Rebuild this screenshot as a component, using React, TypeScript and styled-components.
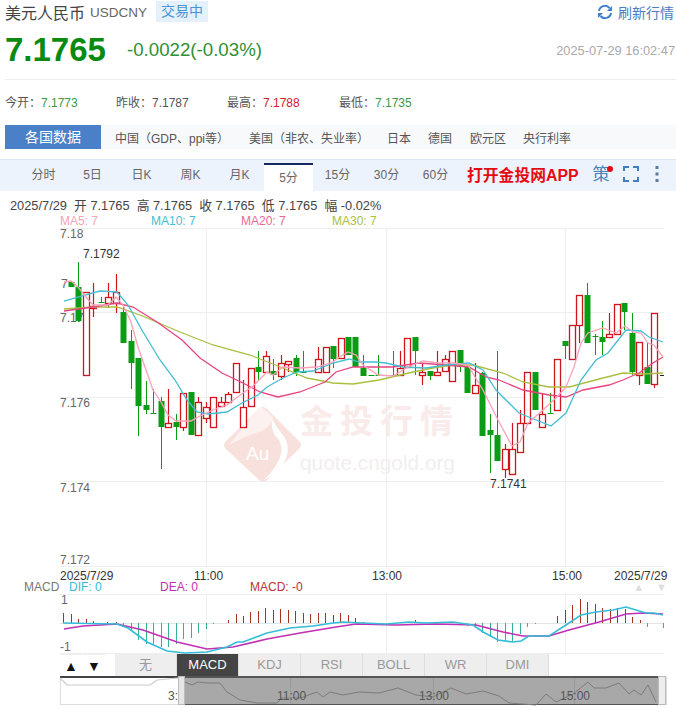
import React from 'react';
import styled, { createGlobalStyle } from 'styled-components';

const FONT = '"Liberation Sans", "Noto Sans CJK SC", sans-serif';

const GlobalStyle = createGlobalStyle`
  html, body { margin: 0; padding: 0; background: #fff; }
  body { font-family: ${FONT}; }
`;

const Page = styled.div`
  width: 676px;
  height: 708px;
  overflow: hidden;
  background: #fff;
`;

const TitleRow = styled.div`
  display: flex;
  align-items: center;
  height: 24px;
  padding: 0 2px 0 5px;
`;
const Title = styled.span`
  font-size: 16px;
  color: #444;
`;
const Symbol = styled.span`
  font-size: 13.5px;
  color: #666;
  margin-left: 5px;
`;
const Badge = styled.span`
  margin-left: 9px;
  margin-top: -1px;
  padding: 0 5px;
  height: 21px;
  line-height: 21px;
  font-size: 14px;
  color: #4a93d6;
  background: #e4f1fb;
`;
const Refresh = styled.span`
  margin-left: auto;
  display: flex;
  align-items: center;
  gap: 5px;
  font-size: 14px;
  color: #4a7cc4;
`;

const QuoteRow = styled.div`
  display: flex;
  align-items: center;
  height: 52px;
  margin-left: 5px;
  padding-bottom: 3px;
  border-bottom: 1px solid #eee;
`;
const Price = styled.span`
  font-size: 33px;
  font-weight: bold;
  color: #0a8a10;
`;
const Change = styled.span`
  margin-left: 21px;
  font-size: 18.7px;
  color: #2f8f35;
`;
const Stamp = styled.span`
  margin-left: auto;
  margin-right: 1px;
  font-size: 12.8px;
  color: #aaa;
`;

const StatRow = styled.div`
  display: flex;
  align-items: center;
  box-sizing: border-box;
  height: 45px;
  padding: 0 0 2px 5px;
  font-size: 12px;
  color: #555;
`;
const Stat = styled.span<{ $width: number }>`
  width: ${(p) => p.$width}px;
`;
const StatValue = styled.span<{ $tone?: 'up' | 'down' }>`
  color: ${(p) => (p.$tone === 'up' ? '#d0202a' : p.$tone === 'down' ? '#3a9a45' : '#555')};
`;

const NavRow = styled.div`
  display: flex;
  align-items: center;
  height: 24px;
  margin-left: 5px;
  background: #f8f9fb;
  font-size: 12px;
  color: #555;
`;
const NavHead = styled.span`
  width: 96px;
  height: 24px;
  line-height: 24px;
  text-align: center;
  font-size: 14px;
  color: #fff;
  background: #4a80c8;
`;
const NavItem = styled.span<{ $left: number }>`
  margin-left: ${(p) => p.$left}px;
`;

const TabBar = styled.div`
  display: flex;
  align-items: flex-end;
  height: 31px;
  margin-top: 10px;
  padding-left: 19px;
  background: #ecf3fc;
  border-top: 1px solid #dbe6f3;
`;
const Period = styled.span<{ $active?: boolean }>`
  width: 49px;
  box-sizing: border-box;
  height: ${(p) => (p.$active ? '28px' : '31px')};
  line-height: ${(p) => (p.$active ? '27px' : '31px')};
  text-align: center;
  font-size: 12px;
  color: #666;
  background: ${(p) => (p.$active ? '#fff' : 'transparent')};
  border-top: ${(p) => (p.$active ? '2px solid #16265f' : 'none')};
`;
const AppLink = styled.span`
  align-self: center;
  margin-left: 7px;
  margin-top: -3px;
  font-size: 15.8px;
  font-weight: bold;
  white-space: nowrap;
  color: #e60b12;
`;
const Strategy = styled.span`
  position: relative;
  align-self: center;
  margin-left: 14px;
  margin-top: -2px;
  font-size: 17px;
  line-height: 22px;
  color: #4a82b8;
`;
const RedDot = styled.i`
  display: block;
  position: absolute;
  top: 2px;
  right: -4px;
  width: 6px;
  height: 6px;
  border-radius: 50%;
  background: #e60b12;
`;
const IconSlot = styled.span<{ $left: number }>`
  align-self: center;
  display: flex;
  margin-left: ${(p) => p.$left}px;
  margin-top: -3px;
`;

const InfoRow = styled.div`
  height: 15px;
  line-height: 16px;
  margin-top: 7px;
  padding-left: 10px;
  font-size: 12.8px;
  color: #444;
  white-space: pre;
`;
const MaRow = styled.div`
  display: flex;
  height: 14px;
  line-height: 16px;
  font-size: 12px;
  padding-left: 60px;
`;
const MaLabel = styled.span<{ $color: string; $width: number }>`
  width: ${(p) => p.$width}px;
  color: ${(p) => p.$color};
`;

const ChartSvg = styled.svg`
  display: block;
  overflow: visible;
`;

const LegendRow = styled.div`
  display: flex;
  align-items: center;
  height: 14px;
  padding-left: 24px;
  font-size: 12px;
  line-height: 10px;
`;
const LegendItem = styled.span<{ $color: string; $width: number }>`
  width: ${(p) => p.$width}px;
  color: ${(p) => p.$color};
`;
const Arrows = styled.span`
  margin-left: auto;
  margin-right: 9px;
  display: flex;
  gap: 12px;
  font-size: 11px;
  color: #ddd;
`;

const IndicatorRow = styled.div`
  display: flex;
  height: 22px;
  padding-left: 60px;
`;
const StepButton = styled.span`
  width: 22px;
  height: 22px;
  line-height: 22px;
  margin-right: 1px;
  text-align: center;
  font-size: 14px;
  color: #111;
  border-top: 1px solid #eee;
  box-sizing: border-box;
`;
const IndicatorTabs = styled.div`
  display: flex;
  margin-left: 9px;
`;
const IndicatorTab = styled.span<{ $active?: boolean }>`
  width: 62px;
  height: 22px;
  line-height: 22px;
  box-sizing: border-box;
  text-align: center;
  font-size: 13px;
  color: ${(p) => (p.$active ? '#fff' : '#999')};
  background: ${(p) => (p.$active ? '#444' : '#eee')};
  border-right: 1px solid #ddd;
`;

// [x, body top, body bottom, high, low, red?]
type Candle = [number, number, number, number, number, 0 | 1];
const candles: Candle[] = [
  [71, 282, 287, 282, 287, 0], [78, 287, 321, 262, 322, 0], [86, 292, 375, 292, 375, 1], [93, 306, 308, 283, 317, 1],
  [101, 302, 303, 297, 303, 0], [108, 297, 303, 283, 308, 1], [116, 292, 303, 274, 313, 1], [123, 312, 343, 307, 343, 0],
  [131, 341, 363, 330, 389, 0], [138, 358, 406, 358, 436, 0], [146, 405, 410, 381, 414, 0], [153, 413, 413, 389, 413, 0],
  [161, 401, 427, 397, 469, 0], [168, 423, 427, 389, 427, 1], [176, 422, 427, 414, 440, 0], [183, 393, 427, 393, 431, 1],
  [191, 392, 435, 392, 435, 0], [198, 402, 435, 397, 435, 1], [206, 407, 418, 402, 423, 1], [213, 397, 427, 397, 427, 1],
  [221, 402, 406, 397, 406, 1], [228, 394, 402, 392, 402, 1], [236, 363, 392, 363, 392, 1], [243, 407, 427, 380, 427, 1],
  [251, 368, 406, 368, 406, 1], [258, 367, 372, 351, 380, 0], [266, 356, 372, 351, 372, 1], [273, 371, 375, 359, 380, 0],
  [281, 363, 376, 355, 380, 1], [288, 361, 364, 361, 372, 1], [296, 358, 372, 355, 376, 0], [303, 372, 372, 351, 372, 0],
  [318, 359, 372, 347, 372, 1], [326, 347, 372, 347, 372, 1], [333, 346, 359, 346, 368, 0], [341, 338, 358, 338, 358, 1],
  [348, 337, 355, 337, 355, 0], [355, 337, 367, 337, 367, 0], [363, 368, 376, 355, 376, 0], [371, 375, 375, 375, 375, 0],
  [378, 375, 375, 355, 375, 0], [393, 375, 375, 351, 375, 0], [400, 368, 375, 351, 375, 1], [407, 338, 367, 338, 367, 1],
  [415, 337, 351, 337, 375, 0], [422, 372, 375, 364, 385, 1], [430, 371, 376, 371, 380, 0], [437, 372, 375, 351, 375, 1],
  [445, 359, 371, 355, 371, 1], [452, 351, 381, 351, 381, 1], [460, 350, 367, 350, 372, 0], [467, 367, 393, 367, 393, 0],
  [475, 385, 393, 363, 393, 1], [482, 373, 436, 372, 436, 0], [490, 430, 435, 414, 473, 0], [497, 435, 461, 351, 461, 0],
  [505, 449, 469, 444, 478, 1], [512, 449, 474, 423, 474, 1], [520, 423, 452, 410, 452, 1], [527, 372, 423, 372, 423, 1],
  [535, 372, 410, 372, 410, 0], [542, 414, 427, 393, 427, 1], [550, 413, 413, 393, 414, 0], [557, 359, 410, 359, 410, 1],
  [565, 341, 346, 341, 359, 0], [572, 325, 359, 325, 359, 1], [579, 295, 325, 295, 343, 1], [587, 295, 343, 283, 343, 0],
  [595, 336, 336, 334, 355, 0], [602, 337, 342, 321, 355, 0], [609, 334, 337, 313, 337, 1], [617, 304, 334, 304, 334, 1],
  [624, 303, 312, 303, 330, 0], [632, 333, 372, 313, 375, 0], [639, 342, 375, 342, 385, 1], [647, 367, 384, 343, 384, 0],
  [654, 313, 384, 313, 388, 1],
];

const ma5 = '64,282 71,281 78,287 86,297 93,305 108,305 116,297 123,305 131,322 138,347 146,370 153,390 161,402 168,415 176,421 191,421 198,417 213,410 227,405 243,393 253,386 267,372 273,375 283,367 300,368 317,367 333,362 338,358 348,352 356,355 363,365 378,375 393,376 408,367 423,361 438,363 453,363 468,365 475,377 483,390 498,420 512,446 520,442 528,423 543,410 557,397 566,387 574,367 581,343 588,333 603,328 616,333 625,326 633,332 641,333 648,343 654,345 663,357';
const ma10 = '64,301 78,297 100,291 117,292 128,305 143,332 160,360 175,380 187,400 197,412 208,414 227,412 242,403 258,395 267,387 283,378 297,372 313,371 333,363 349,359 359,362 376,362 386,363 403,367 426,368 446,365 469,363 483,370 496,390 519,413 551,426 566,413 581,380 596,360 608,353 626,330 641,331 649,337 663,342';
const ma20 = '64,311 93,307 117,303 133,307 157,322 182,340 200,358 222,373 243,383 260,392 278,397 300,392 325,382 336,372 353,367 369,367 393,367 419,363 446,365 469,367 486,377 499,380 523,390 549,395 566,397 583,390 609,385 623,380 639,373 653,363 663,357';
const ma30 = '64,309 93,307 117,307 140,315 180,332 213,345 250,355 283,368 307,378 333,383 353,384 379,380 413,372 433,368 453,365 473,365 503,373 523,382 549,387 569,387 603,378 623,373 643,374 663,373';

const hist: [number, number][] = [
  [63, 613], [71, 614], [78, 619], [86, 619], [93, 621], [107, 622], [116, 622], [123, 627], [131, 631], [138, 640],
  [146, 644], [153, 645], [161, 647], [168, 647], [176, 644], [183, 639], [191, 638], [198, 633], [206, 629], [213, 624],
  [228, 620], [236, 614], [243, 616], [250, 612], [258, 611], [265, 608], [273, 610], [280, 609], [288, 610], [295, 611],
  [303, 613], [310, 614], [318, 613], [325, 613], [333, 615], [340, 613], [348, 615], [355, 618], [363, 622], [408, 622],
  [415, 620], [467, 626], [475, 627], [482, 633], [490, 637], [497, 642], [505, 641], [512, 641], [520, 634], [527, 627],
  [535, 624], [557, 616], [565, 610], [572, 605], [580, 599], [587, 602], [595, 604], [602, 608], [610, 609], [617, 608],
  [625, 609], [632, 617], [640, 620], [647, 627], [663, 628],
];
const dif = '63,623 117,624 128,628 147,642 167,651 185,653 207,652 227,647 237,642 243,642 267,633 290,628 313,626 333,623 343,622 363,623 386,624 409,622 426,623 453,622 473,625 483,632 498,640 513,642 521,641 529,636 549,636 569,623 581,615 596,612 613,610 626,607 636,610 646,613 654,613 663,615';
const dea = '64,629 83,626 117,624 143,630 177,642 207,649 233,647 267,639 300,633 336,627 356,624 396,625 436,624 476,625 503,632 523,636 549,636 569,630 599,622 626,614 643,613 663,614';

const miniLeft = '60,678 67,685 150,685 157,680 178,678';
const miniLine = '185,682 192,685 198,682 207,683 220,683 227,692 240,700 257,703 277,703 282,698 300,698 317,692 323,697 330,692 343,695 359,692 379,693 398,688 416,695 433,697 451,688 466,694 483,691 499,696 509,703 536,705 546,694 556,702 573,694 588,682 594,688 606,688 619,683 629,694 634,690 641,695 648,685 656,702';

const GRID = '#eeeeee';
const RED = '#d0141e';
const GREEN = '#0b9c16';

const priceText = { fontSize: 12, fill: '#666' };
const axisText = { fontSize: 12, fill: '#333' };

const CandleMark = ({ c }: { c: Candle }) => {
  const [x, top, bottom, high, low, red] = c;
  const cx = x + 0.5;
  const color = red ? RED : GREEN;
  return (
    <g>
      <line x1={cx} x2={cx} y1={high} y2={low} stroke={color} strokeWidth={red ? 1.2 : 1} />
      {red ? (
        <rect x={cx - 3} y={top + 0.5} width={6} height={Math.max(bottom - top, 1)} fill="#fff" stroke={color} strokeWidth={1.3} />
      ) : bottom - top < 1 ? (
        <line x1={cx - 3} x2={cx + 3} y1={top + 0.5} y2={top + 0.5} stroke={color} />
      ) : (
        <rect x={cx - 3} y={top} width={6} height={bottom - top} fill={color} />
      )}
    </g>
  );
};

const Watermark = () => (
  <g>
    <path
      d="M226 441 L259 409 Q263 405 267 409 L299 441 Q303 445 299 449 L267 480 Q263 484 259 480 L226 449 Q222 445 226 441 Z"
      fill="#f8e1dd"
    />
    <path d="M229 445 Q250 434 262 431 Q272 425 273 417 L263 408 Q260 406 257 410 Z" fill="#fcf1ef" />
    <path d="M272 419 Q270 432 279 440 Q288 456 264 480 Q276 474 284 463 Q292 447 283 435 Q277 428 272 419 Z" fill="#fff" />
    <text x="246" y="460" fontSize="19" fill="#fff">Au</text>
    <text x="300" y="433" fontSize="33" fontWeight="bold" letterSpacing="7" fill="#f9ebe9">金投行情</text>
    <text x="300" y="470" fontSize="20.8" fill="#f2eeee">quote.cngold.org</text>
  </g>
);

const PriceChart = () => (
  <ChartSvg width={676} height={353} viewBox="0 227 676 353" style={{ fontFamily: FONT }}>
    <Watermark />
    {[228, 312, 397, 481, 566].map((y) => (
      <line key={y} x1={60} x2={664} y1={y + 0.5} y2={y + 0.5} stroke={GRID} />
    ))}
    {[206, 386, 565].map((x) => (
      <line key={x} x1={x + 0.5} x2={x + 0.5} y1={228} y2={566} stroke={GRID} />
    ))}
    <text x={60} y={238} {...priceText}>7.18</text>
    <text x={61} y={288} {...priceText}>7</text>
    <text x={60} y={322} {...priceText}>7.17</text>
    <text x={60} y={407} {...priceText}>7.176</text>
    <text x={60} y={492} {...priceText}>7.174</text>
    <text x={60} y={564} {...priceText}>7.172</text>
    {candles.map((c) => (
      <CandleMark key={c[0]} c={c} />
    ))}
    <line x1={660} x2={664} y1={375.5} y2={375.5} stroke="#222" />
    <polyline points={ma30} fill="none" stroke="#a9c03f" strokeWidth={1.3} />
    <polyline points={ma20} fill="none" stroke="#e8437f" strokeWidth={1.3} />
    <polyline points={ma10} fill="none" stroke="#45bdd2" strokeWidth={1.3} />
    <polyline points={ma5} fill="none" stroke="#f6a3bb" strokeWidth={1.3} />
    <text x={83} y={258} fontSize={12} fill="#333">7.1792</text>
    <text x={490} y={488} fontSize={12} fill="#333">7.1741</text>
    <text x={60} y={580} {...axisText}>2025/7/29</text>
    <text x={194} y={580} {...axisText}>11:00</text>
    <text x={372} y={580} {...axisText}>13:00</text>
    <text x={552} y={580} {...axisText}>15:00</text>
    <text x={614} y={580} {...axisText}>2025/7/29</text>
  </ChartSvg>
);

const MacdChart = () => (
  <ChartSvg width={676} height={60} viewBox="0 594 676 60" style={{ fontFamily: FONT }}>
    {[594, 653].map((y) => (
      <line key={y} x1={60} x2={664} y1={y + 0.5} y2={y + 0.5} stroke={GRID} />
    ))}
    {[206, 386, 565].map((x) => (
      <line key={x} x1={x + 0.5} x2={x + 0.5} y1={594} y2={653} stroke={GRID} />
    ))}
    <line x1={60} x2={664} y1={623.5} y2={623.5} stroke="#e4e4e4" />
    <text x={61} y={604} {...priceText}>1</text>
    <text x={60} y={651} {...priceText}>-1</text>
    {hist.map(([x, y]) => (
      <line key={x} x1={x + 0.5} x2={x + 0.5} y1={623} y2={y} stroke={y < 623 ? '#a5321f' : '#35b09b'} />
    ))}
    <polyline points={dea} fill="none" stroke="#c12fb4" strokeWidth={1.6} />
    <polyline points={dif} fill="none" stroke="#35bcd8" strokeWidth={1.6} />
  </ChartSvg>
);

const Navigator = () => (
  <ChartSvg width={676} height={32} viewBox="0 676 676 32" style={{ fontFamily: FONT }}>
    <rect x={60.5} y={677.5} width={606} height={27} fill="#fff" stroke="#ddd" />
    <rect x={60} y={676} width={118} height={2} fill="#444" />
    <polyline points={miniLeft} fill="none" stroke="#ccc" strokeWidth={1.2} />
    <text x={168} y={700} fontSize={12} fill="#555">3:00</text>
    <rect x={185} y={677} width={473} height={28} fill="#a8a8a8" />
    <line x1={185} x2={658} y1={677} y2={677} stroke="#555" strokeWidth={2} />
    <line x1={185} x2={658} y1={704.5} y2={704.5} stroke="#555" />
    {[290, 433, 574].map((x) => (
      <line key={x} x1={x + 0.5} x2={x + 0.5} y1={678} y2={704} stroke="#999" />
    ))}
    <polyline points={miniLine} fill="none" stroke="#7c7c7c" strokeWidth={1} />
    <text x={277} y={700} fontSize={12} fill="#555">11:00</text>
    <text x={419} y={700} fontSize={12} fill="#555">13:00</text>
    <text x={560} y={700} fontSize={12} fill="#555">15:00</text>
    <rect x={178.5} y={676.5} width={6} height={28} fill="#e6e6e6" stroke="#bbb" />
    <rect x={658.5} y={676.5} width={7} height={28} fill="#eee" stroke="#bbb" />
  </ChartSvg>
);

const RefreshIcon = () => (
  <svg width="16" height="16" viewBox="0 0 16 16" fill="none">
    <path d="M2 7 A6 6 0 0 1 12.5 4" stroke="#3d7fcb" strokeWidth="2" />
    <path d="M14 9 A6 6 0 0 1 3.5 12" stroke="#3d7fcb" strokeWidth="2" />
    <path d="M15 2 L15 7 L10 7 Z" fill="#3d7fcb" />
    <path d="M1 14 L1 9 L6 9 Z" fill="#3d7fcb" />
  </svg>
);

const FullscreenIcon = () => (
  <svg width="16" height="16" viewBox="0 0 16 16" fill="none" stroke="#3f7fc0" strokeWidth="2">
    <path d="M1 5 V1 H6" />
    <path d="M10 1 H15 V5" />
    <path d="M15 11 V15 H10" />
    <path d="M6 15 H1 V11" />
  </svg>
);

const DotsIcon = () => (
  <svg width="4" height="16" viewBox="0 0 4 16" fill="#5a7d9c">
    <rect x="0.5" y="0" width="3" height="3" />
    <rect x="0.5" y="6.5" width="3" height="3" />
    <rect x="0.5" y="13" width="3" height="3" />
  </svg>
);

const periods = ['分时', '5日', '日K', '周K', '月K', '5分', '15分', '30分', '60分'];
const indicators = ['无', 'MACD', 'KDJ', 'RSI', 'BOLL', 'WR', 'DMI'];

export default function App() {
  return (
    <Page>
      <GlobalStyle />
      <TitleRow>
        <Title>美元人民币</Title>
        <Symbol>USDCNY</Symbol>
        <Badge>交易中</Badge>
        <Refresh>
          <RefreshIcon />
          刷新行情
        </Refresh>
      </TitleRow>
      <QuoteRow>
        <Price>7.1765</Price>
        <Change>-0.0022(-0.03%)</Change>
        <Stamp>2025-07-29 16:02:47</Stamp>
      </QuoteRow>
      <StatRow>
        <Stat $width={111}>今开：<StatValue $tone="down">7.1773</StatValue></Stat>
        <Stat $width={111}>昨收：<StatValue>7.1787</StatValue></Stat>
        <Stat $width={112}>最高：<StatValue $tone="up">7.1788</StatValue></Stat>
        <Stat $width={111}>最低：<StatValue $tone="down">7.1735</StatValue></Stat>
      </StatRow>
      <NavRow>
        <NavHead>各国数据</NavHead>
        <NavItem $left={14}>中国（GDP、ppi等）</NavItem>
        <NavItem $left={20}>美国（非农、失业率）</NavItem>
        <NavItem $left={18}>日本</NavItem>
        <NavItem $left={17}>德国</NavItem>
        <NavItem $left={18}>欧元区</NavItem>
        <NavItem $left={17}>央行利率</NavItem>
      </NavRow>
      <TabBar>
        {periods.map((p) => (
          <Period key={p} $active={p === '5分'}>{p}</Period>
        ))}
        <AppLink>打开金投网APP</AppLink>
        <Strategy>
          策
          <RedDot />
        </Strategy>
        <IconSlot $left={14}><FullscreenIcon /></IconSlot>
        <IconSlot $left={16}><DotsIcon /></IconSlot>
      </TabBar>
      <InfoRow>2025/7/29  开 7.1765  高 7.1765  收 7.1765  低 7.1765  幅 -0.02%</InfoRow>
      <MaRow>
        <MaLabel $color="#f6a3bb" $width={91}>MA5: 7</MaLabel>
        <MaLabel $color="#45bdd2" $width={90}>MA10: 7</MaLabel>
        <MaLabel $color="#e8689a" $width={91}>MA20: 7</MaLabel>
        <MaLabel $color="#a9c03f" $width={60}>MA30: 7</MaLabel>
      </MaRow>
      <PriceChart />
      <LegendRow>
        <LegendItem $color="#777" $width={45}>MACD</LegendItem>
        <LegendItem $color="#35bcd8" $width={91}>DIF: 0</LegendItem>
        <LegendItem $color="#c12fb4" $width={90}>DEA: 0</LegendItem>
        <LegendItem $color="#b8323a" $width={60}>MACD: -0</LegendItem>
        <Arrows>
          <span>▲</span>
          <span>▼</span>
        </Arrows>
      </LegendRow>
      <MacdChart />
      <IndicatorRow>
        <StepButton>▲</StepButton>
        <StepButton>▼</StepButton>
        <IndicatorTabs>
          {indicators.map((t) => (
            <IndicatorTab key={t} $active={t === 'MACD'}>{t}</IndicatorTab>
          ))}
        </IndicatorTabs>
      </IndicatorRow>
      <Navigator />
    </Page>
  );
}
